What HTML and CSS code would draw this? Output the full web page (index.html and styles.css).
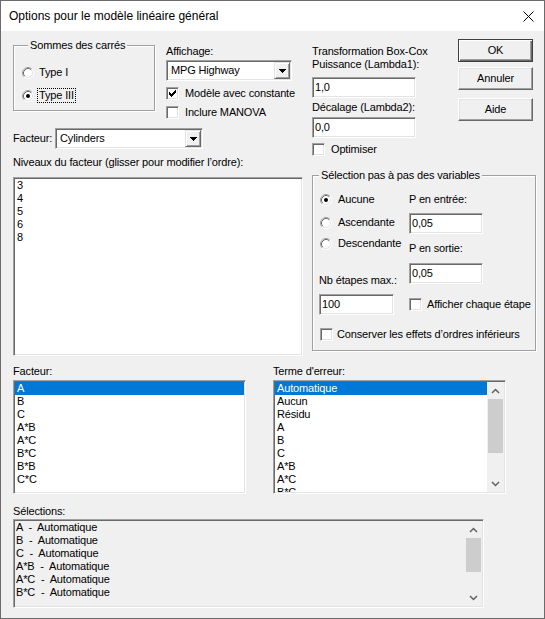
FILE: index.html
```html
<!DOCTYPE html>
<html lang="fr">
<head>
<meta charset="utf-8">
<title>Options pour le modèle linéaire général</title>
<link rel="stylesheet" href="styles.css">
</head>
<body>
<svg class="defs" width="0" height="0" aria-hidden="true">
  <symbol id="radio" viewBox="0 0 12 12">
    <circle cx="6" cy="6" r="5" fill="#fff"/>
    <path d="M2.11 9.89A5.5 5.5 0 0 1 9.89 2.11" stroke="#a0a0a0" fill="none"/>
    <path d="M9.89 2.11A5.5 5.5 0 0 1 2.11 9.89" stroke="#fff" fill="none"/>
    <path d="M2.82 9.18A4.5 4.5 0 0 1 9.18 2.82" stroke="#696969" fill="none"/>
    <path d="M9.18 2.82A4.5 4.5 0 0 1 2.82 9.18" stroke="#e3e3e3" fill="none"/>
  </symbol>
  <symbol id="radio-on" viewBox="0 0 12 12">
    <use href="#radio"/>
    <circle cx="6" cy="6" r="2" fill="#000"/>
  </symbol>
  <symbol id="check" viewBox="0 0 9 9">
    <path d="M1 3h1v3H1z M2 4h1v3H2z M3 5h1v3H3z M4 4h1v3H4z M5 3h1v3H5z M6 2h1v3H6z M7 1h1v3H7z" fill="#000"/>
  </symbol>
  <symbol id="tri" viewBox="0 0 7 4">
    <path d="M0 0h7v1H0z M1 1h5v1H1z M2 2h3v1H2z M3 3h1v1H3z" fill="#000"/>
  </symbol>
  <symbol id="chev-up" viewBox="0 0 9 6">
    <path d="M1 5L4.5 1.5L8 5" stroke="#606060" stroke-width="1.5" fill="none"/>
  </symbol>
  <symbol id="chev-down" viewBox="0 0 9 6">
    <path d="M1 1L4.5 4.5L8 1" stroke="#606060" stroke-width="1.5" fill="none"/>
  </symbol>
</svg>

<div class="window">
  <div class="titlebar">
    <span class="title">Options pour le modèle linéaire général</span>
    <svg class="close" width="11" height="11" viewBox="0 0 11 11"><path d="M0.5 0.5L10.5 10.5M10.5 0.5L0.5 10.5" stroke="#000" stroke-width="1" fill="none"/></svg>
  </div>

  <div class="client">
    <div class="upper">
      <div class="left-col">
        <div class="top-row">
          <div class="group sommes">
            <div class="group-title"><span>Sommes des carrés</span></div>
            <div class="radio-row r-type1"><svg class="radio"><use href="#radio"/></svg><span class="lbl">Type I</span></div>
            <div class="radio-row r-type3"><svg class="radio"><use href="#radio-on"/></svg><span class="lbl focus">Type III</span></div>
          </div>
          <div class="affichage">
            <div class="text">Affichage:</div>
            <div class="combo sunken combo-aff"><span class="combo-text">MPG Highway</span><span class="dd-btn"><svg class="tri"><use href="#tri"/></svg></span></div>
            <div class="check-row cr-const"><span class="checkbox sunken"><svg class="ck"><use href="#check"/></svg></span><span class="clbl">Modèle avec constante</span></div>
            <div class="check-row cr-manova"><span class="checkbox sunken"></span><span class="clbl">Inclure MANOVA</span></div>
          </div>
        </div>

        <div class="facteur-row">
          <span class="facteur-lbl">Facteur:</span>
          <div class="combo sunken combo-fact"><span class="combo-text">Cylinders</span><span class="dd-btn"><svg class="tri"><use href="#tri"/></svg></span></div>
        </div>
        <div class="text niveaux-lbl">Niveaux du facteur (glisser pour modifier l’ordre):</div>
        <div class="listbox sunken niveaux">
          <div class="items">
            <div class="item">3</div>
            <div class="item">4</div>
            <div class="item">5</div>
            <div class="item">6</div>
            <div class="item">8</div>
          </div>
        </div>
      </div>

      <div class="right-col">
        <div class="top-row">
          <div class="boxcox">
            <div class="text">Transformation Box-Cox</div>
            <div class="text">Puissance (Lambda1):</div>
            <div class="edit sunken e-lambda1"><span class="edit-text">1,0</span></div>
            <div class="text t-lambda2">Décalage (Lambda2):</div>
            <div class="edit sunken e-lambda2"><span class="edit-text">0,0</span></div>
            <div class="check-row cr-optim"><span class="checkbox sunken"></span><span class="clbl">Optimiser</span></div>
          </div>
          <div class="buttons">
            <div class="button default b-ok">OK</div>
            <div class="button b-annuler">Annuler</div>
            <div class="button b-aide">Aide</div>
          </div>
        </div>

        <div class="group stepwise">
          <div class="group-title"><span>Sélection pas à pas des variables</span></div>
          <div class="step-cols">
            <div class="step-left">
              <div class="radio-row sr-1"><svg class="radio"><use href="#radio-on"/></svg><span class="lbl">Aucune</span></div>
              <div class="radio-row sr-2"><svg class="radio"><use href="#radio"/></svg><span class="lbl">Ascendante</span></div>
              <div class="radio-row sr-3"><svg class="radio"><use href="#radio"/></svg><span class="lbl">Descendante</span></div>
              <div class="text t-nb">Nb étapes max.:</div>
              <div class="edit sunken e-nb"><span class="edit-text">100</span></div>
            </div>
            <div class="step-right">
              <div class="text t-pin">P en entrée:</div>
              <div class="edit sunken e-p"><span class="edit-text">0,05</span></div>
              <div class="text t-pout">P en sortie:</div>
              <div class="edit sunken e-p e-pout"><span class="edit-text">0,05</span></div>
              <div class="check-row cr-afficher"><span class="checkbox sunken"></span><span class="clbl">Afficher chaque étape</span></div>
            </div>
          </div>
          <div class="check-row cr-conserver"><span class="checkbox sunken"></span><span class="clbl">Conserver les effets d’ordres inférieurs</span></div>
        </div>
      </div>
    </div>

    <div class="lists-row">
      <div class="list-col lc-facteur">
        <div class="text">Facteur:</div>
        <div class="listbox sunken list-bottom">
          <div class="items">
            <div class="item selected">A</div>
            <div class="item">B</div>
            <div class="item">C</div>
            <div class="item">A*B</div>
            <div class="item">A*C</div>
            <div class="item">B*C</div>
            <div class="item">B*B</div>
            <div class="item">C*C</div>
          </div>
        </div>
      </div>
      <div class="list-col lc-terme">
        <div class="text">Terme d'erreur:</div>
        <div class="listbox sunken list-bottom">
          <div class="items">
            <div class="item selected">Automatique</div>
            <div class="item">Aucun</div>
            <div class="item">Résidu</div>
            <div class="item">A</div>
            <div class="item">B</div>
            <div class="item">C</div>
            <div class="item">A*B</div>
            <div class="item">A*C</div>
            <div class="item">B*C</div>
          </div>
          <div class="scrollbar">
            <span class="sb-btn"><svg class="chev"><use href="#chev-up"/></svg></span>
            <div class="sb-track"><div class="sb-thumb thumb-terme"></div></div>
            <span class="sb-btn"><svg class="chev"><use href="#chev-down"/></svg></span>
          </div>
        </div>
      </div>
    </div>

    <div class="text sel-lbl">Sélections:</div>
    <div class="listbox sunken selections">
      <div class="items">
        <div class="item pre">A  -  Automatique</div>
        <div class="item pre">B  -  Automatique</div>
        <div class="item pre">C  -  Automatique</div>
        <div class="item pre">A*B  -  Automatique</div>
        <div class="item pre">A*C  -  Automatique</div>
        <div class="item pre">B*C  -  Automatique</div>
      </div>
      <div class="scrollbar">
        <span class="sb-btn"><svg class="chev"><use href="#chev-up"/></svg></span>
        <div class="sb-track"><div class="sb-thumb thumb-sel"></div></div>
        <span class="sb-btn"><svg class="chev"><use href="#chev-down"/></svg></span>
      </div>
    </div>
  </div>
</div>
</body>
</html>
```

FILE: styles.css
```css
* { box-sizing: border-box; }

html, body {
  margin: 0;
  padding: 0;
  background: #f0f0f0;
}

body {
  font-family: "Liberation Sans", Arial, sans-serif;
  font-size: 11px;
  line-height: 13px;
  letter-spacing: -0.15px;
  color: #000;
}

.defs { position: absolute; width: 0; height: 0; overflow: hidden; }

.window {
  width: 545px;
  height: 619px;
  border: 1px solid #6b6b6b;
  background: #f0f0f0;
  overflow: hidden;
}

/* ---------- title bar ---------- */
.titlebar {
  height: 30px;
  background: #fff;
  display: flex;
  align-items: center;
  justify-content: space-between;
  padding: 0 10px 0 8px;
}
.title {
  font-size: 12px;
  letter-spacing: 0;
  line-height: 16px;
  white-space: nowrap;
}
.close { display: block; width: 11px; height: 11px; }

/* ---------- client area ---------- */
.client { padding-left: 12px; }

.text { height: 13px; white-space: nowrap; }

.upper { display: flex; align-items: flex-start; }
.left-col { width: 290px; }
.right-col { width: 224px; margin-left: 9px; }

.top-row { display: flex; align-items: flex-start; }

/* ---------- 3D borders ---------- */
.sunken {
  border: 1px solid;
  border-color: #a0a0a0 #fff #fff #a0a0a0;
  box-shadow: inset 1px 1px 0 #696969, inset -1px -1px 0 #e3e3e3;
  padding: 1px;
  background: #fff;
}

.button {
  width: 75px;
  height: 23px;
  display: flex;
  align-items: center;
  justify-content: center;
  background: #f0f0f0;
  border: 1px solid;
  border-color: #fff #696969 #696969 #fff;
  box-shadow: inset -1px -1px 0 #a0a0a0, inset 1px 1px 0 #e3e3e3;
}
.button.default {
  border: 1px solid #404040;
  box-shadow: inset 1px 1px 0 #fff, inset -1px -1px 0 #696969, inset -2px -2px 0 #a0a0a0;
}
.b-ok { margin-top: 8px; }
.b-annuler { margin-top: 5px; }
.b-aide { margin-top: 8px; }

/* ---------- group boxes ---------- */
.group {
  border: 1px solid #a0a0a0;
  box-shadow: inset 1px 1px 0 #fff, 1px 1px 0 #fff;
}
.group-title {
  height: 13px;
  margin-top: -7px;
  padding-left: 6px;
  white-space: nowrap;
}
.group-title span {
  background: #f0f0f0;
  padding: 0 2px;
}

.sommes {
  width: 142px;
  height: 66px;
  margin-top: 14px;
  padding-left: 8px;
}

/* ---------- radios ---------- */
.radio-row {
  display: flex;
  align-items: center;
  height: 13px;
  white-space: nowrap;
}
.radio { width: 12px; height: 12px; flex: none; display: block; margin-right: 4px; }
.lbl { padding: 0 1px; line-height: 13px; }
.lbl.focus { outline: 1px dotted #000; outline-offset: 0; }
.r-type1 { margin-top: 14px; }
.r-type3 { margin-top: 10px; }

/* ---------- checkboxes ---------- */
.check-row {
  display: flex;
  align-items: center;
  height: 13px;
  white-space: nowrap;
}
.checkbox {
  width: 13px;
  height: 13px;
  flex: none;
  display: block;
  margin-right: 5px;
}
.ck { display: block; width: 9px; height: 9px; }
.cr-const { margin-top: 6px; }
.cr-manova { margin-top: 6px; }
.cr-const .checkbox, .cr-manova .checkbox, .cr-optim .checkbox { margin-right: 6px; }

/* ---------- combos ---------- */
.combo {
  display: flex;
  height: 21px;
}
.combo-text {
  flex: 1;
  padding-left: 3px;
  line-height: 17px;
  white-space: nowrap;
  overflow: hidden;
}
.dd-btn {
  width: 16px;
  height: 17px;
  flex: none;
  background: #f0f0f0;
  border: 1px solid;
  border-color: #e3e3e3 #696969 #696969 #e3e3e3;
  box-shadow: inset 1px 1px 0 #fff, inset -1px -1px 0 #a0a0a0;
  display: flex;
  align-items: center;
  justify-content: center;
}
.tri { display: block; width: 7px; height: 4px; margin-top: 1px; }

.affichage { width: 126px; margin-left: 11px; margin-top: 14px; }
.combo-aff { margin-top: 2px; width: 126px; }

.facteur-row {
  display: flex;
  align-items: center;
  margin-top: 9px;
  height: 21px;
}
.facteur-lbl { width: 42px; white-space: nowrap; }
.combo-fact { width: 148px; }

.niveaux-lbl { margin-top: 7px; }

/* ---------- edits ---------- */
.edit { height: 21px; }
.edit-text { display: block; padding-left: 1px; line-height: 17px; white-space: nowrap; }

.boxcox { width: 104px; margin-top: 14px; }
.boxcox .edit { width: 104px; }
.e-lambda1 { margin-top: 6px; }
.t-lambda2 { margin-top: 3px; }
.e-lambda2 { margin-top: 3px; }
.cr-optim { margin-top: 5px; }

.buttons { margin-left: 42px; width: 75px; }

/* ---------- stepwise group ---------- */
.stepwise {
  width: 224px;
  height: 176px;
  margin-top: 19px;
}
.step-cols { display: flex; padding-left: 6px; }
.step-left { width: 90px; }
.step-left .radio { margin-left: 1px; margin-right: 5px; }
.sr-1 { margin-top: 11px; }
.sr-2 { margin-top: 10px; }
.sr-3 { margin-top: 8px; }
.t-nb { margin-top: 24px; }
.e-nb { margin-top: 7px; width: 75px; }

.t-pin { margin-top: 11px; }
.e-p { margin-top: 7px; width: 74px; }
.t-pout { margin-top: 8px; }
.e-pout { margin-top: 8px; }
.cr-afficher { margin-top: 14px; }

.cr-conserver { margin-top: 13px; padding-left: 7px; }
.cr-conserver .checkbox { margin-right: 4px; }

/* ---------- list boxes ---------- */
.listbox {
  display: flex;
  overflow: hidden;
}
.items { flex: 1; overflow: hidden; }
.item {
  height: 13px;
  line-height: 13px;
  padding-left: 2px;
  white-space: nowrap;
}
.item.pre { white-space: pre; padding-left: 1px; }
.item.selected { background: #0078d7; color: #fff; }

.niveaux { margin-top: 8px; width: 290px; height: 179px; }

.lists-row { display: flex; margin-top: 9px; }
.lc-facteur { width: 233px; }
.lc-terme { width: 233px; margin-left: 27px; }
.list-bottom { margin-top: 2px; height: 114px; }

.sel-lbl { margin-top: 11px; }
.selections {
  margin-top: 1px;
  width: 471px;
  height: 89px;
  background: #f0f0f0;
}

/* ---------- scrollbars ---------- */
.scrollbar {
  width: 17px;
  flex: none;
  background: #f0f0f0;
  display: flex;
  flex-direction: column;
}
.sb-btn {
  height: 17px;
  flex: none;
  display: flex;
  align-items: center;
  justify-content: center;
}
.chev { display: block; width: 9px; height: 6px; }
.sb-track { flex: 1; }
.sb-thumb { background: #cdcdcd; margin: 0 1px; }
.thumb-terme { height: 54px; }
.thumb-sel { height: 34px; }
```
